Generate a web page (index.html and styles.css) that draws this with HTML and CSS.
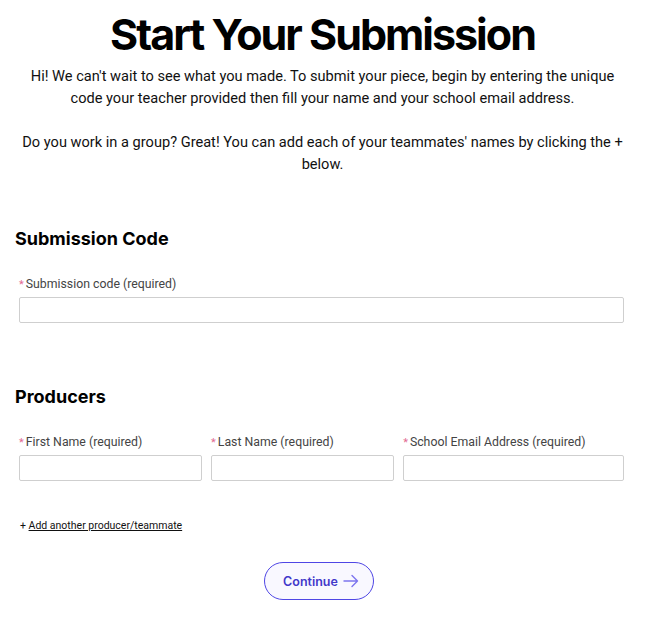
FILE: index.html
```html
<!DOCTYPE html>
<html>
<head>
<meta charset="utf-8">
<link rel="stylesheet" href="styles.css">
</head>
<body>
<main class="page">
  <header class="intro">
    <h1 class="title">Start Your Submission</h1>
    <p class="lead">Hi! We can't wait to see what you made. To submit your piece, begin by entering the unique code your teacher provided then fill your name and your school email address.<br><br>Do you work in a group? Great! You can add each of your teammates' names by clicking the + below.</p>
  </header>

  <section class="section">
    <h2 class="section-title">Submission Code</h2>
    <div class="fields">
      <div class="field">
        <label class="label"><span class="req">*</span>Submission code (required)</label>
        <input class="input" type="text">
      </div>
    </div>
  </section>

  <section class="section section-producers">
    <h2 class="section-title">Producers</h2>
    <div class="fields fields-3">
      <div class="field">
        <label class="label"><span class="req">*</span>First Name (required)</label>
        <input class="input" type="text">
      </div>
      <div class="field">
        <label class="label"><span class="req">*</span>Last Name (required)</label>
        <input class="input" type="text">
      </div>
      <div class="field">
        <label class="label"><span class="req">*</span>School Email Address (required)</label>
        <input class="input" type="text">
      </div>
    </div>
    <div class="add-row">+ <a class="add-link" href="#">Add another producer/teammate</a></div>
  </section>

  <div class="actions">
    <button class="btn" type="button">Continue
      <svg class="btn-arrow" width="16" height="14" viewBox="0 0 16 14" fill="none" stroke="currentColor" stroke-width="1.4" stroke-linecap="round" stroke-linejoin="round"><path d="M1 7h13.5M9 1.5L14.5 7 9 12.5"/></svg>
    </button>
  </div>
</main>
</body>
</html>
```
FILE: styles.css
```css
* { box-sizing: border-box; }
html, body { margin: 0; padding: 0; background: #fff; }
body { font-family: Roboto, "Liberation Sans", sans-serif; color: #111; }

.page { padding: 8px 24px 0 15px; }

.intro { text-align: center; }
.title {
  margin: 0;
  font-family: Inter, "Liberation Sans", sans-serif;
  font-weight: 700;
  font-size: 43px;
  line-height: 52px;
  letter-spacing: -2px;
  color: #000;
}
.lead {
  margin: 5px 0 0;
  font-size: 14.6px;
  line-height: 22px;
  color: #111;
}

.section { margin-top: 52px; }
.section-producers { margin-top: 62px; }
.section-title {
  margin: 0;
  font-family: Inter, "Liberation Sans", sans-serif;
  font-weight: 700;
  font-size: 18px;
  line-height: 24px;
  color: #000;
}
.fields { margin: 25px 6px 0 4px; display: grid; grid-template-columns: minmax(0, 1fr); gap: 9px; }
.fields-3 { grid-template-columns: minmax(0, 184fr) minmax(0, 184fr) minmax(0, 222fr); }
.field { display: flex; flex-direction: column; min-width: 0; }
.label {
  display: block;
  height: 16px;
  font-size: 12.3px;
  line-height: 16px;
  color: #444;
  margin-bottom: 5px;
  white-space: nowrap;
}
.req { color: #e26a92; font-size: 11px; line-height: 0; margin-right: 2px; }
.input {
  width: 100%;
  min-width: 0;
  height: 26px;
  border: 1px solid #cfcfcf;
  border-radius: 2px;
  background: #fff;
  margin: 0;
  padding: 0 6px;
  font: inherit;
}

.add-row {
  margin: 38px 0 0 5px;
  font-size: 10.5px;
  line-height: 14px;
  color: #111;
}
.add-link { color: #111; text-decoration: underline; }

.actions { display: flex; justify-content: center; margin: 29px 11px 0 4px; }
.btn {
  display: inline-flex;
  align-items: center;
  gap: 5px;
  height: 38px;
  width: 110px;
  justify-content: center;
  border: 1px solid #4f46e5;
  border-radius: 19px;
  background: #f9f8ff;
  color: #4338ca;
  font-family: Inter, Roboto, sans-serif;
  font-weight: 600;
  font-size: 12.5px;
  padding: 0 0 0 4px;
}
.btn-arrow { color: #7d75ee; }
```
